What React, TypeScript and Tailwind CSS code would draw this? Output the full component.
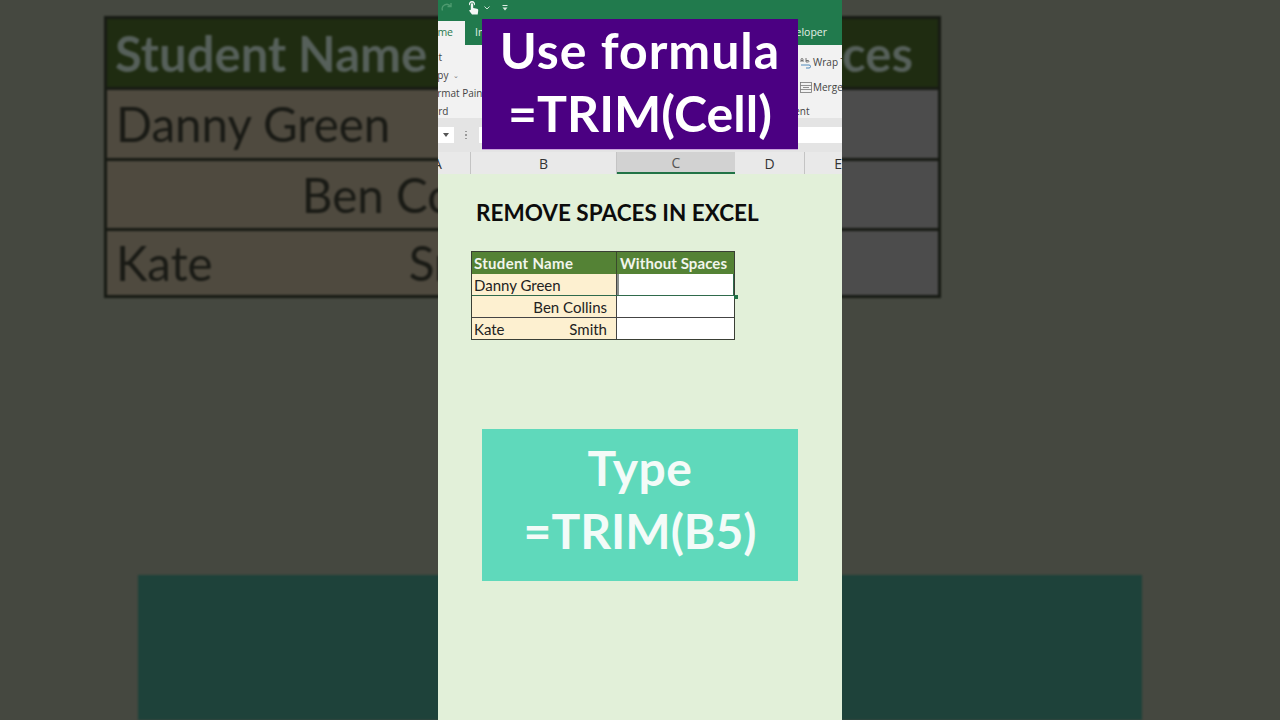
import React from 'react';

const calibri = { fontFamily: 'Lato, "Open Sans", sans-serif' };
const segoe = { fontFamily: '"Open Sans", "Noto Sans", sans-serif' };

const ColHead: React.FC<{ label: string; className: string }> = ({ label, className }) => (
  <div className={`flex items-center justify-center border-r border-[#c4c4c4] text-[14px] text-[#333] ${className}`}>
    {label}
  </div>
);

const Ribbon: React.FC = () => (
  <div className="flex h-[73px] justify-between overflow-hidden bg-[#f2f2f2] text-[10px] text-[#444]" style={segoe}>
    <div className="ml-[-26px] flex flex-col gap-[3px] whitespace-nowrap pt-[5px] leading-[15px]">
      <div className="pl-[14px]">Cut</div>
      <div className="flex items-center gap-[5px] pl-[13px]">
        Copy <span className="text-[7px] text-[#777]">⌄</span>
      </div>
      <div className="pl-[14px]">Format Painter</div>
      <div className="ml-[-9px]">Clipboard</div>
    </div>
    <div className="flex w-[44px] flex-col whitespace-nowrap pl-[2px] pt-[10px]">
      <div className="flex items-center gap-[2px] leading-[15px]">
        <svg className="shrink-0" width="11" height="12" viewBox="0 0 11 12" fill="none" stroke="#666" strokeWidth="0.9">
          <path d="M1 5V2.500a1 1 0 0 1 2 0V5M1 3.500h2M6 1v4M6 3.500h2.500a1 1 0 0 1 0 1.500H6" />
          <path d="M1 8h8a1.500 1.500 0 0 1 0 3H6" stroke="#3f7fb5" />
        </svg>
        Wrap Text
      </div>
      <div className="mt-[10px] flex items-center gap-[1px] leading-[15px]">
        <svg className="shrink-0" width="12" height="11" viewBox="0 0 12 11" fill="none" stroke="#777" strokeWidth="0.8">
          <rect x="0.500" y="0.500" width="11" height="10" />
          <path d="M0.500 3.500h11M0.500 7.500h11M3 5.500h6" />
        </svg>
        Merge
      </div>
      <div className="ml-[-38px] mt-[9px] leading-[15px]">Alignment</div>
    </div>
  </div>
);

const App: React.FC = () => {
  return (
    <div className="relative h-[720px] w-[1280px] overflow-hidden bg-[#454840]" style={calibri}>
      {/* Blurred, darkened copy behind the video */}
      <div className="flex h-full flex-col pt-[16px] blur-[1px]">
        <div className="ml-[104px] w-[837px] border-[3px] border-[#171a14] text-[47.500px] leading-none text-[#191a15]">
          <div className="flex h-[68px] items-center justify-between bg-[#1f2c11] pl-[8px] pr-[25px] text-[49px] font-bold text-[#56605a]">
            <span>Student Name</span>
            <span>Without Spaces</span>
          </div>
          <div className="flex h-[71px] items-center border-t-[3px] border-[#171a14]">
            <div className="flex h-full w-[463px] items-center bg-[#4f4a3f] pl-[9px]">Danny Green</div>
            <div className="h-full flex-1 bg-[#4c4c4c]" />
          </div>
          <div className="flex h-[70px] items-center border-t-[3px] border-[#171a14]">
            <div className="flex h-full w-[463px] items-center justify-end bg-[#4f4a3f] pr-[35px]">Ben Collins</div>
            <div className="h-full flex-1 bg-[#4c4c4c]" />
          </div>
          <div className="flex h-[67px] items-center border-t-[3px] border-[#171a14]">
            <div className="flex h-full w-[463px] items-center justify-between bg-[#4f4a3f] pl-[9px] pr-[42px]">
              <span>Kate</span>
              <span>Smith</span>
            </div>
            <div className="h-full flex-1 bg-[#4c4c4c]" />
          </div>
        </div>
        <div className="ml-[138px] mt-[277px] w-[1004px] flex-1 bg-[#1e423a]" />
      </div>

      {/* Video column */}
      <div className="absolute bottom-0 left-[438px] top-0 flex w-[404px] flex-col overflow-hidden bg-[#e2f0d9]">
        <div className="flex h-[21px] items-start bg-[#217a4d] pl-[3px] pt-[1px]">
          <svg width="12" height="12" viewBox="0 0 12 12" fill="none" stroke="#4d9a6f" strokeWidth="1.400">
            <path d="M1.500 9.500a4.500 4.500 0 0 1 8-4M10 2v3.500H6.500" />
          </svg>
          <svg className="ml-[15px]" width="11" height="14" viewBox="0 0 11 14" fill="#f4f7f5">
            <path d="M4 0a3 3 0 0 1 2.600 4.500L6 3.600a2 2 0 1 0-4 0l-.6.900A3 3 0 0 1 4 0z" />
            <path d="M2.800 3.500a1.200 1.200 0 0 1 2.400 0V7l3.800.8c1 .3 1.400 1 1.200 2L9.700 13.500H4L1 9.500l1.800-.7z" />
          </svg>
          <svg className="ml-[5px] mt-[5px]" width="6" height="4" viewBox="0 0 6 4" fill="none" stroke="#cfe3d7">
            <path d="M0.500 0.500L3 3l2.500-2.500" />
          </svg>
          <svg className="ml-[12px] mt-[4px]" width="6" height="6" viewBox="0 0 6 6" fill="#dcebe2">
            <rect x="0.500" y="0" width="5" height="1" />
            <path d="M0.500 2.500h5L3 5.500z" />
          </svg>
        </div>
        <div className="flex h-[24px] items-center justify-between bg-[#217a4d] pr-[15px] text-[10.500px] text-[#e4f0e9]" style={segoe}>
          <div className="flex h-full items-center">
            <div className="flex h-full w-[27px] items-center justify-end bg-[#f2f2f2] pr-[12px] text-[#2b7a50]">me</div>
            <span className="ml-[10px]">In</span>
          </div>
          <span>Developer</span>
        </div>
        <Ribbon />
        <div className="flex h-[34px] items-center bg-[#e4e4e4]">
          <div className="flex h-[16px] w-[16px] items-center justify-center bg-white">
            <span className="h-0 w-0 border-x-[3px] border-t-[4px] border-x-transparent border-t-[#555]" />
          </div>
          <div className="ml-[11px] flex flex-col gap-[2px]">
            <span className="h-[1.500px] w-[1.500px] bg-[#999]" />
            <span className="h-[1.500px] w-[1.500px] bg-[#999]" />
            <span className="h-[1.500px] w-[1.500px] bg-[#999]" />
          </div>
          <div className="ml-[12px] h-[16px] flex-1 bg-white" />
        </div>
        <div className="flex h-[22px] bg-[#e9e9e9]" style={segoe}>
          <ColHead label="A" className="w-[33px] justify-start pl-0 indent-[-5px]" />
          <ColHead label="B" className="w-[146px]" />
          <div className="flex w-[118px] items-center justify-center border-b-2 border-[#217346] bg-[#d2d2d2] text-[14px] text-[#555]">C</div>
          <ColHead label="D" className="w-[70px]" />
          <div className="flex flex-1 items-center justify-end text-[14px] text-[#333]">E</div>
        </div>

        {/* Sheet */}
        <div className="flex flex-1 flex-col bg-[#e2f0d9] pl-[33px]">
          <h1 className="mt-[25px] pl-[5px] text-[22.500px] font-bold leading-[28px] text-[#0c0c0c]">
            REMOVE SPACES IN EXCEL
          </h1>
          <div className="mt-[24px] w-[264px] border border-[#3a3f35] text-[15px] leading-none text-[#222]">
            <div className="flex h-[22px] bg-[#548235] font-bold text-[#f1f5ec]">
              <div className="flex w-[145px] items-center border-r border-[#3a4a2c] pl-[2px] pt-[1px] tracking-[0.3px]">Student Name</div>
              <div className="flex flex-1 items-center pl-[3px] pt-[1px] tracking-[0.1px]">Without Spaces</div>
            </div>
            <div className="flex h-[22px] border-b border-[#2f6a4c]">
              <div className="flex w-[145px] items-center border-r border-[#444] bg-[#fdf0d0] pl-[2px] pt-[2px]">Danny Green</div>
              <div className="flex-1 border-l-2 border-[#8a8f8d] border-r border-r-[#2f6a4c] bg-white" />
            </div>
            <div className="flex h-[22px] border-b border-[#444]">
              <div className="flex w-[145px] items-center justify-end border-r border-[#444] bg-[#fdf0d0] pr-[9px] pt-[2px]">Ben Collins</div>
              <div className="flex-1 bg-white" />
            </div>
            <div className="flex h-[21px]">
              <div className="flex w-[145px] items-center justify-between border-r border-[#444] bg-[#fdf0d0] pl-[2px] pr-[9px] pt-[2px]">
                <span>Kate</span>
                <span>Smith</span>
              </div>
              <div className="flex-1 bg-white" />
            </div>
          </div>
        </div>

        {/* Callouts */}
        <div className="absolute left-[44px] top-[19px] flex h-[131px] w-[316px] flex-col items-center border-b border-[#c9a2dc] bg-[#4b0082] text-[50px] font-bold leading-[63px] text-white">
          <div className="tracking-[1px]">Use formula</div>
          <div>=TRIM(Cell)</div>
        </div>
        <div className="absolute left-[44px] top-[429px] flex h-[152px] w-[316px] flex-col items-center bg-[#5fd9bb] pt-[7px] text-[48px] font-bold leading-[63px] text-[#f3fbf8]">
          <div className="tracking-[0.5px]">Type</div>
          <div>=TRIM(B5)</div>
        </div>
        {/* Fill handle */}
        <div className="absolute left-[296px] top-[295px] h-[4px] w-[4px] bg-[#217346]" />
      </div>
    </div>
  );
};

export default App;
